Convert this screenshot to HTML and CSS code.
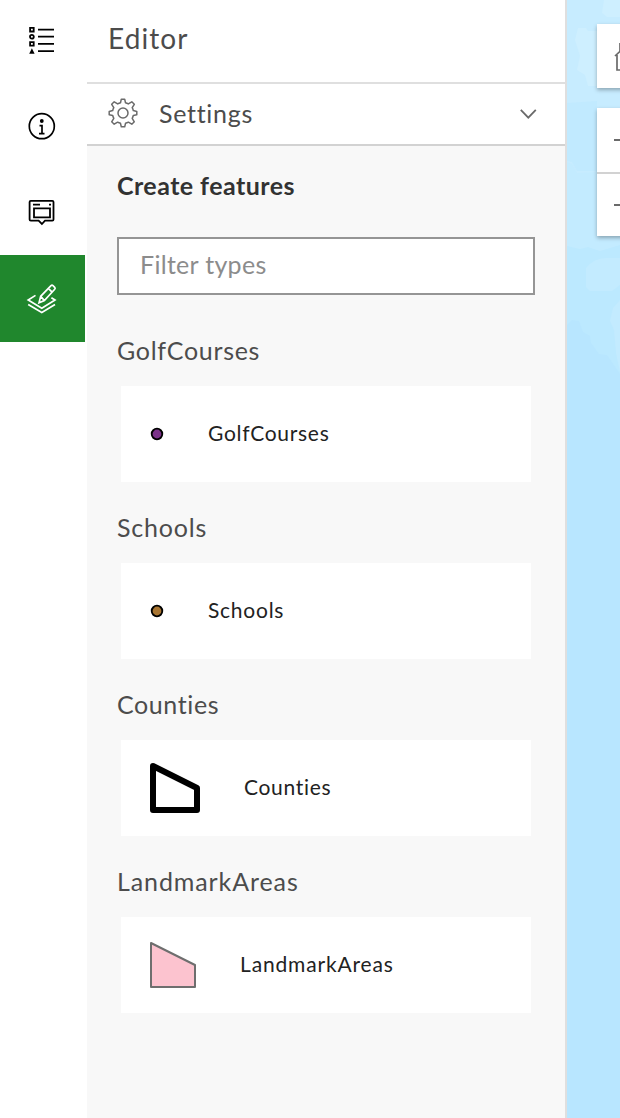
FILE: index.html
```html
<!DOCTYPE html>
<html lang="en">
<head>
<meta charset="utf-8">
<title>Editor</title>
<link rel="stylesheet" href="styles.css">
</head>
<body>
<div class="app">
  <nav class="rail">
    <button class="rail-item rail-first" aria-label="Legend">
      <svg width="30" height="30" viewBox="0 0 30 30" fill="none" stroke="#000" stroke-width="1.8">
        <path d="M11 3.7h16M11 10.7h16M11 17.9h16M11 25.1h16"/>
        <path d="M3.1 1.9h3.6v3.6H3.1zM3.1 16.1h3.6v3.6H3.1z"/><circle cx="4.9" cy="10.7" r="1.9"/>
        <path d="M4.9 22.3l2.7 5.4H2.2z" fill="#000" stroke="none"/>
      </svg>
    </button>
    <button class="rail-item" aria-label="About">
      <svg width="30" height="30" viewBox="0 0 30 30" fill="none" stroke="#000" stroke-width="1.7">
        <circle cx="15.8" cy="15.2" r="12.5"/><circle cx="15.8" cy="10" r="1.9" fill="#000" stroke="none"/>
        <path d="M13.5 14.7h2.5v7.8M13 22.6h5.5"/>
      </svg>
    </button>
    <button class="rail-item rail-popup" aria-label="Popup">
      <svg width="30" height="30" viewBox="0 0 30 30" fill="none" stroke="#000" stroke-width="1.8">
        <path d="M3.8 2.9h21.5q1.2 0 1.2 1.2v17.3q0 1.2-1.2 1.2H18L14.9 26l-3.3-3.4H3.8q-1.2 0-1.2-1.2V4.1q0-1.2 1.2-1.2z"/>
        <path d="M6 6.7h7M22 6.7h2M7 10.4h16v9H7z"/>
      </svg>
    </button>
    <button class="rail-item rail-active" aria-label="Edit">
      <svg width="32" height="32" viewBox="0 0 32 32" fill="none" stroke="#fff" stroke-width="1.7">
        <path d="M9.5 13.4L2.2 18l13.6 8.2L29 18l-3.6-2.2M2.2 22.6l13.6 8 13.2-8"/>
        <path d="M13 20.9l1.7-6.6L25 3.6q1-.9 2 0l1.7 1.7q.9 1 0 2L18.4 18.6zM14.7 14.3l3.7 4.3M22.4 6.3l3.7 3.8"/>
      </svg>
    </button>
  </nav>
  <main class="panel">
    <header class="panel-header"><h1 class="title">Editor</h1></header>
    <div class="settings">
      <svg width="32" height="32" viewBox="0 0 32 32" fill="none" stroke="#6a6a6a" stroke-width="1.5">
        <path d="M14.3 2.2h3.4l.8 3.6q1.5.4 2.8 1.1l3.5-2.1 2.5 2.5-2.1 3.4q.8 1.4 1.1 2.9l3.5.8v3.3l-3.5.8q-.3 1.5-1.1 2.9l2.1 3.4-2.5 2.4-3.4-2q-1.4.7-2.9 1.1l-.8 3.5h-3.4l-.8-3.5q-1.5-.4-2.9-1.1l-3.4 2-2.5-2.4 2.1-3.4q-.8-1.4-1.1-2.9l-3.5-.8v-3.3l3.5-.8q.3-1.5 1.1-2.9L4.7 7.3l2.5-2.5 3.5 2.1q1.3-.7 2.8-1.1z" stroke-linejoin="round"/>
        <circle cx="16" cy="16" r="5"/>
      </svg>
      <span class="settings-label">Settings</span>
      <svg class="chevron" width="18" height="12" viewBox="0 0 18 12" fill="none" stroke="#6a6a6a" stroke-width="1.8"><path d="M1.8 1.9L9.3 9.6l7.5-7.7"/></svg>
    </div>
    <div class="content">
      <h2 class="heading">Create features</h2>
      <input class="filter" type="text" placeholder="Filter types" aria-label="Filter types">
      <section class="group">
        <h3 class="group-title golf-title">GolfCourses</h3>
        <div class="card">
          <svg class="symbol" width="14" height="14" viewBox="0 0 14 14"><circle cx="7" cy="7" r="5.3" fill="#7b3289" stroke="#000" stroke-width="1.8"/></svg>
          <span class="label golf-label">GolfCourses</span>
        </div>
      </section>
      <section class="group">
        <h3 class="group-title schools-title">Schools</h3>
        <div class="card">
          <svg class="symbol" width="14" height="14" viewBox="0 0 14 14"><circle cx="7" cy="7" r="5.3" fill="#a87532" stroke="#000" stroke-width="1.8"/></svg>
          <span class="label schools-label">Schools</span>
        </div>
      </section>
      <section class="group">
        <h3 class="group-title counties-title">Counties</h3>
        <div class="card">
          <svg class="symbol" width="50" height="50" viewBox="0 0 50 50"><path d="M3 3l44 22v22H3z" fill="none" stroke="#000" stroke-width="6" stroke-linejoin="round"/></svg>
          <span class="label counties-label">Counties</span>
        </div>
      </section>
      <section class="group">
        <h3 class="group-title areas-title">LandmarkAreas</h3>
        <div class="card">
          <svg class="symbol" width="46" height="46" viewBox="0 0 46 46"><path d="M1 1l44 22v22H1z" fill="#fcc3cf" stroke="#6e6e6e" stroke-width="2" stroke-linejoin="round"/></svg>
          <span class="label areas-label">LandmarkAreas</span>
        </div>
      </section>
    </div>
  </main>
  <aside class="map">
    <svg class="water" width="53" height="1118" viewBox="0 0 53 1118">
      <path fill="#b8e6ff" d="M0 0h53v1118H0z"/>
      <path fill="#bce9ff" d="M0 0h53v374l-13-19-8-1-8-11-1-7-7-4-4-11-7-1-5 5z"/>
      <path fill="#c3ebff" d="M0 0h53v245l-20 6-12-4-8 2-13-3z"/>
      <path fill="#c7ecff" d="M0 0h53v108l-23 2-1 62-19 1-5-9-5-2z"/>
      <path fill="#c1eaff" d="M0 103l30-2v70H10l-5-9-5-1z"/>
      <path fill="#ceefff" d="M11 28h8l2 3h11v55H21l-3-11-8-5 3-14-5-16zM37 0h16v17H40l-5-4z"/>
      <path fill="#c3ebff" d="M19 268q8-10 20-10h14v27l-8 6H23l-4-4zM53 300v72l-4-19-2-23-4-9 3-13z"/>
    </svg>
    <div class="controls">
      <div class="control home">
        <svg width="32" height="32" viewBox="0 0 32 32" fill="none" stroke="#6a6a6a" stroke-width="1.7"><path d="M2 16L16 3l14 13M4 15v15h8V20h8v10h8V15M7 11V3"/></svg>
      </div>
      <div class="zoom">
        <div class="control"><svg width="32" height="32" viewBox="0 0 32 32" stroke="#6a6a6a" stroke-width="2"><path d="M1 16h30M16 1v30"/></svg></div>
        <div class="control zoom-out"><svg width="32" height="32" viewBox="0 0 32 32" stroke="#6a6a6a" stroke-width="2"><path d="M1 16h30"/></svg></div>
      </div>
    </div>
  </aside>
</div>
</body>
</html>
```
FILE: styles.css
```css
* { box-sizing: border-box; }
body { margin: 0; background: #fff; font-family: Lato, "Open Sans", sans-serif; color: #4c4c4c; }
h1, h2, h3 { margin: 0; font-weight: 400; }
.app { display: grid; grid-template-columns: 87px 480px 53px; height: 1118px; overflow: hidden; }
.rail { display: flex; flex-direction: column; width: 85px; }
.rail-item { display: flex; align-items: center; justify-content: center; height: 86px; padding: 0 3px 0 0; border: 0; background: none; }
.rail-first { height: 83px; padding: 0 1px 1px 0; }
.rail-popup { padding: 2px 1px 0 0; }
.rail-active { height: 87px; padding: 0 2px 2px 0; background: #20872d; }
.panel { display: flex; flex-direction: column; border-right: 2px solid #dfdfdf; background: #f8f8f8; }
.panel-header { height: 84px; padding: 20px 21px 0; border-bottom: 2px solid #dfdfdf; background: #fff; }
.title { font-size: 28px; line-height: 36px; letter-spacing: 1.1px; }
.settings { display: flex; align-items: center; height: 62px; padding: 0 28px 2px 20px; border-bottom: 2px solid #d2d2d2; background: #fff; }
.settings-label { flex: 1; margin-left: 20px; padding-bottom: 1px; font-size: 25px; line-height: 32px; letter-spacing: .7px; }
.chevron { margin-top: 2px; }
.content { padding: 23px 30px 0; }
.heading { font-size: 25px; line-height: 32px; font-weight: 700; color: #323232; letter-spacing: .45px; }
.filter { display: block; width: 418px; height: 58px; margin-top: 36px; padding: 0 21px 4px; border: 2px solid #959595; border-radius: 0; background: #fff; font: 400 25px Lato, sans-serif; letter-spacing: .3px; }
.filter::placeholder { color: #8c8c8c; opacity: 1; }
.group { height: 177px; padding-top: 39px; }
.group-title { font-size: 25px; line-height: 32px; }
.golf-title { letter-spacing: .7px; }
.schools-title { letter-spacing: .8px; }
.counties-title { letter-spacing: .6px; }
.areas-title { letter-spacing: .9px; }
.card { display: flex; align-items: center; width: 410px; height: 96px; margin: 20px 0 0 4px; padding-left: 29px; background: #fff; }
.symbol { margin-right: 44px; }
.label { padding-bottom: 2px; font-size: 21px; line-height: 28px; color: #222; }
.golf-label { letter-spacing: .7px; }
.schools-label { letter-spacing: .75px; }
.counties-label { letter-spacing: .7px; }
.areas-label { letter-spacing: .85px; }
.map { display: grid; overflow: hidden; }
.water, .controls { grid-area: 1 / 1; }
.controls { padding: 24px 0 0 30px; width: 94px; }
.control { display: flex; align-items: center; justify-content: center; width: 64px; height: 64px; background: #fff; }
.home, .zoom { box-shadow: 0 2px 4px rgba(0, 0, 0, .3); }
.zoom { margin-top: 20px; }
.zoom-out { border-top: 2px solid #d2d2d2; }
```
